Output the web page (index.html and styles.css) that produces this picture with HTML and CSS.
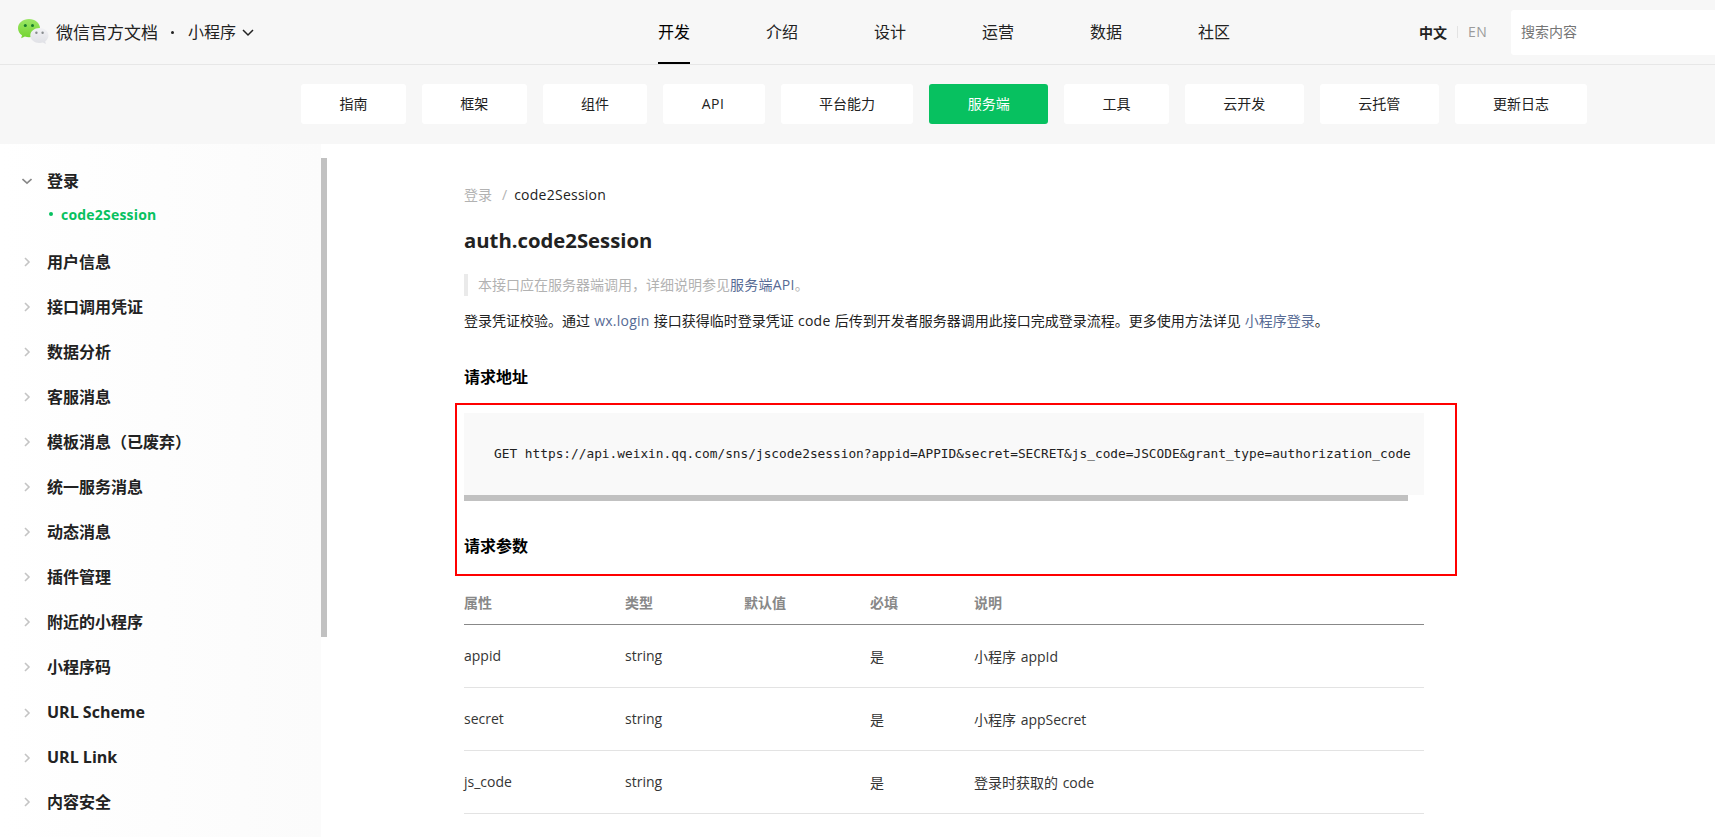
FILE: index.html
```html
<!DOCTYPE html>
<html lang="zh-CN">
<head>
	<meta charset="utf-8">
	<title>auth.code2Session | 微信开放文档</title>
	<link rel="stylesheet" href="styles.css">
</head>
<body>
	<header class="header">
		<div class="header__brand">
			<svg class="logo" width="31" height="26" viewBox="0 0 31 26">
				<defs>
					<linearGradient id="green" x1="0" y1="0" x2="0" y2="1">
						<stop offset="0" stop-color="#9be665"/>
						<stop offset="1" stop-color="#74d430"/>
					</linearGradient>
					<linearGradient id="grey" x1="0" y1="0" x2="0" y2="1">
						<stop offset="0" stop-color="#f2f2f5"/>
						<stop offset="1" stop-color="#dfe0e5"/>
					</linearGradient>
				</defs>
				<path fill="url(#green)" d="M11 0C4.900 0 0 4 0 9.200c0 2.900 1.600 5.400 4 7.100l-.8 3 3.700-1.700c1.300.4 2.700.6 4.100.6 6.100 0 11-4 11-9S17.100 0 11 0z"/>
				<circle cx="7.300" cy="6.500" r="1.500" fill="#187c2c"/>
				<circle cx="14.500" cy="6.500" r="1.500" fill="#187c2c"/>
				<path fill="url(#grey)" d="M21.500 9C16.400 9 12.300 12.300 12.300 16.500s4.100 7.500 9.200 7.500c1.200 0 2.400-.2 3.400-.5l3 1.500-.7-2.600c2-1.400 3.300-3.500 3.300-5.900C30.500 12.300 26.500 9 21.500 9z"/>
				<circle cx="18.400" cy="13.800" r="1.200" fill="#878b8e"/>
				<circle cx="24.600" cy="13.800" r="1.200" fill="#878b8e"/>
			</svg>
			<span class="header__title">微信官方文档</span>
			<span class="header__dot"></span>
			<span class="header__product">小程序</span>
			<svg class="header__arrow" width="12" height="8" viewBox="0 0 12 8"><path d="M1 1l5 5 5-5" fill="none" stroke="#222" stroke-width="1.500"/></svg>
		</div>
		<nav class="nav">
			<a class="nav__item nav__item--active">开发</a>
			<a class="nav__item">介绍</a>
			<a class="nav__item">设计</a>
			<a class="nav__item">运营</a>
			<a class="nav__item">数据</a>
			<a class="nav__item">社区</a>
		</nav>
		<div class="lang">
			<span class="lang__zh">中文</span>
			<span class="lang__line"></span>
			<span class="lang__en">EN</span>
		</div>
		<input class="search" type="text" placeholder="搜索内容">
	</header>

	<nav class="tabs">
		<a class="tab">指南</a>
		<a class="tab">框架</a>
		<a class="tab">组件</a>
		<a class="tab tab--api">API</a>
		<a class="tab">平台能力</a>
		<a class="tab tab--active">服务端</a>
		<a class="tab">工具</a>
		<a class="tab">云开发</a>
		<a class="tab">云托管</a>
		<a class="tab">更新日志</a>
	</nav>

	<div class="page">
		<aside class="sidebar">
			<ul class="menu">
				<li class="menu__item menu__item--open"><svg class="arrow" width="10" height="10" viewBox="0 0 10 10"><path d="M.5 3L5 7.200 9.500 3"/></svg>登录</li>
				<li class="menu__sub">code2Session</li>
				<li class="menu__item"><svg class="arrow" width="10" height="10" viewBox="0 0 10 10"><path d="M3 1l4 4-4 4"/></svg>用户信息</li>
				<li class="menu__item"><svg class="arrow" width="10" height="10" viewBox="0 0 10 10"><path d="M3 1l4 4-4 4"/></svg>接口调用凭证</li>
				<li class="menu__item"><svg class="arrow" width="10" height="10" viewBox="0 0 10 10"><path d="M3 1l4 4-4 4"/></svg>数据分析</li>
				<li class="menu__item"><svg class="arrow" width="10" height="10" viewBox="0 0 10 10"><path d="M3 1l4 4-4 4"/></svg>客服消息</li>
				<li class="menu__item"><svg class="arrow" width="10" height="10" viewBox="0 0 10 10"><path d="M3 1l4 4-4 4"/></svg>模板消息（已废弃）</li>
				<li class="menu__item"><svg class="arrow" width="10" height="10" viewBox="0 0 10 10"><path d="M3 1l4 4-4 4"/></svg>统一服务消息</li>
				<li class="menu__item"><svg class="arrow" width="10" height="10" viewBox="0 0 10 10"><path d="M3 1l4 4-4 4"/></svg>动态消息</li>
				<li class="menu__item"><svg class="arrow" width="10" height="10" viewBox="0 0 10 10"><path d="M3 1l4 4-4 4"/></svg>插件管理</li>
				<li class="menu__item"><svg class="arrow" width="10" height="10" viewBox="0 0 10 10"><path d="M3 1l4 4-4 4"/></svg>附近的小程序</li>
				<li class="menu__item"><svg class="arrow" width="10" height="10" viewBox="0 0 10 10"><path d="M3 1l4 4-4 4"/></svg>小程序码</li>
				<li class="menu__item menu__item--latin"><svg class="arrow" width="10" height="10" viewBox="0 0 10 10"><path d="M3 1l4 4-4 4"/></svg>URL Scheme</li>
				<li class="menu__item menu__item--latin"><svg class="arrow" width="10" height="10" viewBox="0 0 10 10"><path d="M3 1l4 4-4 4"/></svg>URL Link</li>
				<li class="menu__item"><svg class="arrow" width="10" height="10" viewBox="0 0 10 10"><path d="M3 1l4 4-4 4"/></svg>内容安全</li>
			</ul>
		</aside>
		<div class="scroll"></div>

		<main class="content">
			<div class="crumbs"><span class="crumbs__parent">登录</span><span class="crumbs__sep">/</span><span class="latin">code2Session</span></div>
			<h1>auth.code2Session</h1>
			<blockquote>本接口应在服务器端调用，详细说明参见<a class="latin">服务端API</a>。</blockquote>
			<p class="intro">登录凭证校验。通过 <a class="latin">wx.login</a> 接口获得临时登录凭证 <span class="latin">code</span> 后传到开发者服务器调用此接口完成登录流程。更多使用方法详见 <a>小程序登录</a>。</p>

			<h3>请求地址</h3>
			<pre class="code">GET https://api.weixin.qq.com/sns/jscode2session?appid=APPID&amp;secret=SECRET&amp;js_code=JSCODE&amp;grant_type=authorization_code</pre>
			<div class="code__scroll"></div>

			<h3 class="params">请求参数</h3>
			<table>
				<thead>
					<tr><th class="c-name">属性</th><th class="c-type">类型</th><th class="c-default">默认值</th><th class="c-required">必填</th><th>说明</th></tr>
				</thead>
				<tbody>
					<tr><td>appid</td><td>string</td><td></td><td>是</td><td>小程序 appId</td></tr>
					<tr><td>secret</td><td>string</td><td></td><td>是</td><td>小程序 appSecret</td></tr>
					<tr><td>js_code</td><td>string</td><td></td><td>是</td><td>登录时获取的 code</td></tr>
				</tbody>
			</table>

			<div class="marker"></div>
		</main>
	</div>
</body>
</html>
```
FILE: styles.css
```css
body {
	margin: 0;
	height: 837px;
	overflow: hidden;
	font-family: "Open Sans", "Noto Sans CJK SC", sans-serif;
	font-size: 14px;
	color: #222;
	background-color: #fff;
}

a {
	color: #576b95;
	text-decoration: none;
}

.latin {
	letter-spacing: .25px;
}

/* top bar */

.header {
	display: flex;
	align-items: center;
	box-sizing: border-box;
	height: 65px;
	padding-left: 18px;
	background-color: #f7f7f7;
	border-bottom: 1px solid #e7e7e7;
	overflow: hidden;
}

.header__brand {
	display: flex;
	align-items: center;
	flex: 0 0 640px;
	font-size: 16px;
}

.header__title {
	margin-left: 7px;
	padding-bottom: 2px;
	font-size: 17px;
}

.header__product {
	padding-bottom: 2px;
}

.header__dot {
	width: 3px;
	height: 3px;
	margin: 0 14px 0 13px;
	border-radius: 50%;
	background-color: #222;
}

.header__arrow {
	margin: 1px 0 0 6px;
}

.nav {
	display: flex;
	gap: 76px;
	flex: 0 0 761px;
}

.nav__item {
	box-sizing: border-box;
	height: 64px;
	line-height: 65px;
	font-size: 16px;
	color: #222;
}

.nav__item--active {
	color: #000;
	border-bottom: 2px solid #000;
}

.lang {
	display: flex;
	align-items: center;
	flex: 0 0 92px;
	padding-bottom: 1px;
}

.lang__zh {
	font-weight: bold;
}

.lang__line {
	width: 1px;
	height: 12px;
	margin: 0 10px;
	background-color: #e3e3e3;
}

.lang__en {
	letter-spacing: .5px;
	color: #9b9b9b;
}

.search {
	flex: 0 0 220px;
	box-sizing: border-box;
	height: 45px;
	padding: 0 10px 2px;
	border: none;
	border-radius: 3px;
	font: inherit;
	background-color: #fff;
}

.search::placeholder {
	color: #757575;
}

/* second level tabs */

.tabs {
	display: flex;
	gap: 16px;
	height: 60px;
	padding: 19px 0 0 301px;
	background-color: #f7f7f7;
}

.tab {
	height: 40px;
	padding: 0 38.4px;
	line-height: 39px;
	border-radius: 3px;
	color: #222;
	background-color: #fff;
}

.tab--api {
	width: 24.500px;
	letter-spacing: .5px;
}

.tab--active {
	color: #fff;
	background-color: #07c160;
}

/* layout */

.page {
	display: flex;
	height: 693px;
}

.sidebar {
	flex: 0 0 321px;
	background: linear-gradient(to right, #fff, #fbfbfb);
}

.menu {
	margin: 0;
	padding: 14px 0 0 22px;
	list-style: none;
}

.menu__item {
	display: flex;
	align-items: center;
	gap: 15px;
	box-sizing: border-box;
	height: 45px;
	padding-bottom: 2px;
	font-size: 16px;
	font-weight: 600;
}

.menu__item--latin {
	padding-bottom: 0;
	font-weight: bold;
}

.menu__sub {
	display: flex;
	align-items: center;
	gap: 8px;
	height: 22px;
	margin-bottom: 14px;
	padding-left: 27px;
	font-weight: bold;
	letter-spacing: .2px;
	color: #07c160;
}

.menu__sub::before {
	content: "";
	width: 4px;
	height: 4px;
	border-radius: 50%;
	background-color: #07c160;
}

.arrow {
	margin-top: 2px;
}

.arrow path {
	fill: none;
	stroke: #c4c4c4;
	stroke-width: 1.6;
}

.menu__item--open .arrow path {
	stroke: #888;
}

.scroll {
	flex: 0 0 6px;
	height: 479px;
	margin-top: 14px;
	background-color: #c1c1c1;
}

/* document */

.content {
	position: relative;
	width: 960px;
	margin-left: 137px;
}

.crumbs {
	margin-top: 40px;
	line-height: 22px;
}

.crumbs__parent,
.crumbs__sep {
	color: #b2b2b2;
}

.crumbs__sep {
	margin: 0 7px 0 10px;
}

h1 {
	margin: 19px 0 18px;
	font-size: 20.3px;
	line-height: 31px;
}

blockquote {
	margin: 0;
	padding-left: 10px;
	border-left: 4px solid #eaeaea;
	line-height: 22px;
	color: #b2b2b2;
}

.intro {
	margin: 14px 0 0;
	line-height: 22px;
	white-space: nowrap;
	word-spacing: .5px;
}

h3 {
	margin: 33px 0 24px;
	font-size: 16px;
	font-weight: 600;
	line-height: 24px;
	color: #000;
}

.code {
	box-sizing: border-box;
	height: 82px;
	margin: 0;
	padding: 30px 0 0 30px;
	font-family: "DejaVu Sans Mono", monospace;
	font-size: 12.8px;
	line-height: 22px;
	background-color: #f9f9f9;
}

.code__scroll {
	width: 944px;
	height: 6px;
	background-color: #c1c1c1;
}

.params {
	margin: 33px 0 22px;
}

table {
	width: 100%;
	table-layout: fixed;
	border-spacing: 0;
	border-collapse: collapse;
}

th,
td {
	box-sizing: border-box;
	padding: 0;
	text-align: left;
}

th {
	height: 44px;
	border-bottom: 1px solid #888;
	font-weight: 600;
	color: #888;
}

td {
	height: 63px;
	border-bottom: 1px solid #e3e3e3;
	word-spacing: 1px;
	color: #353535;
}

.c-name {
	width: 161px;
}

.c-type {
	width: 119px;
}

.c-default {
	width: 126px;
}

.c-required {
	width: 104px;
}

/* red frame over the request section */
.marker {
	position: absolute;
	top: 259px;
	left: -9px;
	box-sizing: border-box;
	width: 1002px;
	height: 173px;
	border: 2px solid #f00;
}
```
